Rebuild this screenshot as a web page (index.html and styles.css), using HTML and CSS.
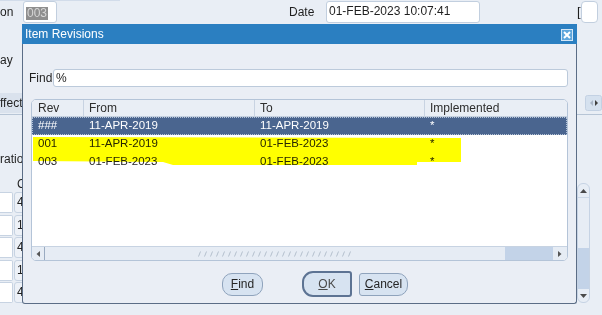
FILE: index.html
```html
<!DOCTYPE html>
<html>
<head>
<meta charset="utf-8">
<link rel="stylesheet" href="styles.css">
</head>
<body>
<div class="form">
  <div class="topline"></div>
  <div class="row1">
    <span class="lbl on">on</span>
    <div class="fld rev"><span class="sel">003</span></div>
    <span class="lbl datelbl">Date</span>
    <div class="fld datefld">01-FEB-2023 10:07:41</div>
    <span class="brk">[</span>
    <div class="fld chk"></div>
  </div>
  <div class="row2"><span class="lbl">ay</span></div>
  <div class="band">
    <div class="tab">ffect</div>
    <div class="tabnav">
      <svg width="17" height="16" viewBox="0 0 17 16"><rect x="0.5" y="0.5" width="16" height="15" rx="2" fill="#d5e1ef" stroke="#c3d1e3"/><path d="M8 5 L5 8 L8 11 Z" fill="#a9b6c7"/><path d="M10 5 L13 8 L10 11 Z" fill="#3f3f3f"/></svg>
    </div>
  </div>
  <div class="lower">
    <div class="leftcol">
      <div class="ratio">ratio</div>
      <div class="colhead">C</div>
      <div class="lrow"><div class="lin"></div><div class="lnum">4</div></div>
      <div class="lrow"><div class="lin"></div><div class="lnum">1</div></div>
      <div class="lrow"><div class="lin"></div><div class="lnum">4</div></div>
      <div class="lrow"><div class="lin"></div><div class="lnum">1</div></div>
      <div class="lrow"><div class="lin"></div><div class="lnum">4</div></div>
    </div>
    <div class="vscroll">
      <div class="varr"><svg width="11" height="12" viewBox="0 0 11 12"><path d="M2 8 L5.5 4 L9 8 Z" fill="#4a4a4a"/></svg></div>
      <div class="vthumb"></div>
      <div class="vtrack"></div>
      <div class="varr"><svg width="11" height="12" viewBox="0 0 11 12"><path d="M2 4 L5.5 8 L9 4 Z" fill="#4a4a4a"/></svg></div>
    </div>
  </div>
</div>

<div class="dialog">
  <div class="title">
    <span class="ttext">Item Revisions</span>
    <span class="close"><svg width="12" height="12" viewBox="0 0 12 12"><rect x="0.5" y="0.5" width="11" height="11" fill="#5ea6dc" stroke="#d3e6f6"/><path d="M3 3 L9 9 M9 3 L3 9" stroke="#ffffff" stroke-width="2"/></svg></span>
  </div>
  <div class="dbody">
    <div class="findrow">
      <span class="flabel">Find</span>
      <div class="finput">%</div>
    </div>
    <div class="table">
      <div class="thead grid">
        <div class="c">Rev</div><div class="c">From</div><div class="c">To</div><div class="c">Implemented</div>
      </div>
      <div class="trow grid selrow">
        <div class="c">###</div><div class="c">11-APR-2019</div><div class="c">11-APR-2019</div><div class="c">*</div>
      </div>
      <div class="trow grid">
        <div class="c">001</div><div class="c">11-APR-2019</div><div class="c">01-FEB-2023</div><div class="c">*</div>
      </div>
      <div class="trow grid">
        <div class="c">003</div><div class="c">01-FEB-2023</div><div class="c">01-FEB-2023</div><div class="c">*</div>
      </div>
      <div class="tfill"></div>
      <div class="hscroll">
        <div class="harr left"><svg width="8" height="10" viewBox="0 0 8 10"><path d="M6 2 L2.5 5 L6 8 Z" fill="#555"/></svg></div>
        <div class="hthumb">
          <svg width="156" height="6" viewBox="0 0 156 6"><defs><pattern id="grip" width="6" height="6" patternUnits="userSpaceOnUse"><path d="M1.5 5.5 L3.5 0.5" stroke="#b4bfcd" stroke-width="1"/></pattern></defs><rect width="156" height="6" fill="url(#grip)"/></svg>
        </div>
        <div class="htrack"></div>
        <div class="harr right"><svg width="8" height="10" viewBox="0 0 8 10"><path d="M2 2 L5.5 5 L2 8 Z" fill="#555"/></svg></div>
      </div>
    </div>
    <div class="btns">
      <button class="btn find"><u>F</u>ind</button>
      <button class="btn ok"><u>O</u>K</button>
      <button class="btn cancel"><u>C</u>ancel</button>
    </div>
  </div>
</div>

<svg class="hilite" width="428" height="28" viewBox="0 0 428 28"><polygon points="0,0 428,1 428,25 384,25 384,28 140,28 130,25 0,24" fill="#ffff00"/></svg>
</body>
</html>
```

FILE: styles.css
```css
* { box-sizing: border-box; }
html, body { margin: 0; padding: 0; }
body {
  width: 602px;
  height: 315px;
  overflow: hidden;
  position: relative;
  background: #e9eef5;
  font-family: "Liberation Sans", Arial, sans-serif;
  font-size: 12px;
  color: #1f1f1f;
}

/* background form */
.form { display: flex; flex-direction: column; }
.topline { height: 1px; width: 120px; background: #d2dcea; }
.row1 { display: flex; height: 22px; }
.lbl { line-height: 22px; white-space: nowrap; }
.on { width: 23px; }
.fld {
  background: #ffffff;
  border: 1px solid #c2cfdf;
  border-radius: 3px;
}
.rev { width: 34px; padding: 4px 0 0 2px; }
.sel { background: #8e8e8e; color: #d6d6d6; line-height: 13px; display: inline-block; padding: 0 1px; }
.datelbl { margin-left: 232px; width: 37px; }
.datefld { width: 154px; padding-left: 2px; line-height: 18px; }
.brk { margin-left: 97px; width: 4px; line-height: 22px; font-size: 13px; }
.chk { width: 17px; border-radius: 4px; }

.row2 { margin-top: 29px; height: 16px; }
.row2 .lbl { line-height: 16px; }

.band {
  margin-top: 25px;
  height: 22px;
  display: flex;
  border-bottom: 1px solid #b7c5d6;
}
.tab {
  width: 60px;
  height: 20px;
  background: #dae2ed;
  line-height: 20px;
  white-space: nowrap;
}
.tabnav { margin-left: auto; margin-top: 2px; height: 16px; }
.tabnav svg { display: block; }

.lower { display: flex; }
.leftcol { width: 40px; }
.ratio { margin-top: 36px; height: 16px; line-height: 16px; }
.colhead { margin-top: 10px; height: 15px; line-height: 15px; padding-left: 17px; }
.lrow { display: flex; height: 21px; margin-bottom: 1.5px; }
.lin {
  width: 13px;
  background: #ffffff;
  border: 1px solid #c7d3e2;
  border-left: 0;
  border-radius: 0 2px 2px 0;
}
.lnum {
  width: 24px;
  margin-left: 1px;
  background: #edf1f7;
  border: 1px solid #c7d3e2;
  border-radius: 3px;
  padding-left: 2px;
  line-height: 19px;
}
.vscroll {
  margin-left: 537px;
  margin-top: 68px;
  width: 13px;
  height: 120px;
  border: 1px solid #c6d3e4;
  border-radius: 6px;
  background: #e7edf5;
  display: flex;
  flex-direction: column;
  overflow: hidden;
}
.varr { height: 13px; display: flex; justify-content: center; align-items: center; }
.varr svg { display: block; }
.vthumb { height: 51px; border-top: 1px solid #ccd8e7; }
.vtrack { flex: 1; background: #c3d3e8; }

/* dialog window */
.dialog {
  position: absolute;
  left: 22px;
  top: 24px;
  width: 555px;
  height: 280px;
  background: #eaeef5;
  border: 1px solid #5b6d86;
  border-top: 0;
  border-radius: 0 0 3px 3px;
}
.title {
  height: 20px;
  margin: 0 -1px;
  background: #2b7fc1;
  color: #ffffff;
  display: flex;
  justify-content: space-between;
  align-items: flex-start;
  padding: 0 4px 0 3px;
}
.ttext { line-height: 20px; }
.close { margin-top: 5px; }
.close svg { display: block; }

.dbody { padding: 0 8px 0 6px; }
.findrow { margin-top: 25px; height: 18px; display: flex; }
.flabel { width: 24px; line-height: 18px; }
.finput {
  flex: 1;
  background: #ffffff;
  border: 1px solid #bccadb;
  border-radius: 3px;
  padding-left: 2px;
  line-height: 16px;
}

.table {
  margin-top: 12px;
  margin-left: 2px;
  height: 162px;
  border: 1px solid #b4c4d8;
  border-radius: 5px;
  overflow: hidden;
  background: #ffffff;
  display: flex;
  flex-direction: column;
}
.grid { display: grid; grid-template-columns: 51px 171px 170px 1fr; }
.thead {
  height: 17px;
  background: #e9eef5;
  border-bottom: 1px solid #c3cfdf;
  color: #2e2e2e;
}
.thead .c { line-height: 16px; padding-left: 5px; border-left: 1px solid #c8d3e2; }
.thead .c:first-child { border-left: 0; padding-left: 6px; }
.trow { height: 18px; font-size: 11.5px; color: #262626; }
.trow .c { line-height: 17px; padding-left: 6px; }
.trow .c:first-child { padding-left: 6px; }
.selrow {
  background: #4a658f;
  color: #ffffff;
  outline: 1px dotted #b5c3d6;
  outline-offset: -1px;
}
.tfill { flex: 1; }
.hscroll {
  height: 14px;
  display: flex;
  background: #e6ecf4;
  border-top: 1px solid #c7d3e2;
}
.harr { display: flex; align-items: center; justify-content: center; }
.harr svg { display: block; }
.harr.left { width: 13px; border-right: 1px solid #9aabc1; }
.hthumb { width: 460px; display: flex; align-items: center; justify-content: center; }
.hthumb svg { display: block; }
.htrack { width: 48px; background: #c3d3e8; }
.harr.right { flex: 1; }

.btns { margin-top: 10px; height: 26px; display: flex; align-items: center; }
.btn {
  font-family: "Liberation Sans", Arial, sans-serif;
  font-size: 12px;
  color: #262626;
  background: #d7e3f1;
  border: 1px solid #8fa3bc;
  padding: 0;
  height: 23px;
  cursor: default;
}
.btn u { text-decoration: underline; }
.find { margin-left: 193px; width: 41px; border-radius: 10px; }
.ok {
  margin-left: 39px;
  width: 50px;
  height: 26px;
  border: 2px solid #5d7393;
  border-radius: 11px 3px 3px 11px;
  color: #4a4a4a;
}
.cancel { margin-left: 7px; width: 49px; border-radius: 3px 10px 10px 3px; }

/* yellow marker annotation over the rows */
.hilite {
  position: absolute;
  left: 33px;
  top: 137px;
  display: block;
  mix-blend-mode: multiply;
}
```
